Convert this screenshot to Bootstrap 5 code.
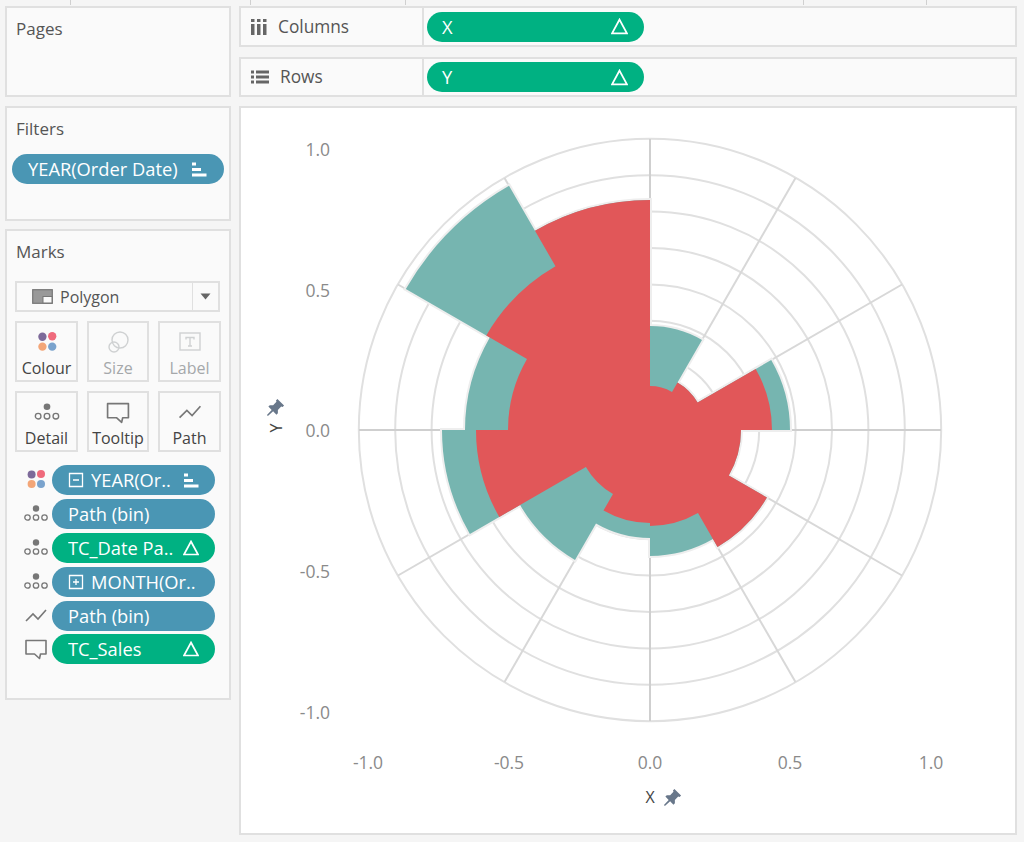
<!DOCTYPE html>
<html lang="en">
<head>
<meta charset="utf-8">
<title>Polar chart</title>
<link href="https://cdn.jsdelivr.net/npm/bootstrap@5.3.0/dist/css/bootstrap.min.css" rel="stylesheet">
<style>
html,body{height:842px;overflow:hidden}
body{background:#f5f5f5;font-family:"Open Sans","Liberation Sans",sans-serif;font-size:16px;color:#555}
.wb{height:842px;padding:6px 7px 7px 5px;gap:8px}
.side{width:226px;flex:none}
.pane{background:#fafafa;border:2px solid #e0e0e0;box-sizing:border-box}
.pg{height:91px;margin-bottom:9px}.fl{height:115px;margin-bottom:8px}.mk{height:471px}
.ttl{font-size:17px;color:#555;line-height:20px;padding:11px 0 0 9px}
.main{flex:1;gap:10px;min-width:0}
.shelf{height:41px}
.shelf+.shelf{height:40px;margin-bottom:-1px}
.shelf-h{width:183px;flex:none;border-right:2px solid #e0e0e0;padding-left:10px;gap:11px;font-size:17.300px}
.pl{height:30px;color:#fff;font-size:18.300px;line-height:30px;padding:0 15px;white-space:nowrap}
.blue{background:#4a96b4}.green{background:#00b182}
.sh-pl{width:217px;margin:0 0 0 3px;padding:0 16px 0 15px}
.fp{margin:15px 5px 0 5px;padding:0 17px 0 16px}
.dd{height:31px;margin:19px 9px 0 8px;border:2px solid #e0e0e0;background:#fafafa;font-size:16px}
.dd-l{flex:1;padding-left:15px;gap:7px}
.dd-r{width:26px;border-left:1px solid #e0e0e0;flex:none}
.cards{padding:9px 9px 0 8px;grid-template-columns:63px 62px 63px;column-gap:9px;row-gap:9px;display:grid}
.cd{height:61px;border:2px solid #e0e0e0;font-size:16px;line-height:18px;color:#444;padding-top:7px;gap:4px}
.cd svg{height:25px;width:30px}
.off{color:#a5a8aa}
.rows{padding:13px 14px 0 0;gap:3.900px}
.rw{height:30px;gap:4px;padding-left:17px}
.rw>svg{width:24px;height:24px;flex:none}
.rw .pl{flex:1;padding:0 16px;display:flex;align-items:center;gap:7px}
.grow{flex:1;overflow:hidden}
.chart{background:#fff;flex:1;min-height:0;position:relative}
.chart svg{position:absolute;left:-2px;top:-2px}
.ax{font-family:"Open Sans","Liberation Sans",sans-serif;font-size:17.500px;fill:#8a8a8a}
.axn{font-family:"Open Sans","Liberation Sans",sans-serif;font-size:16px;fill:#444}
.rul{height:7px;position:absolute;top:0;left:0;width:1024px}
.rul i{position:absolute;top:0;height:5px;width:1px;background:#d0d0d0}
</style>
</head>
<body>
<svg width="0" height="0" class="d-block position-absolute">
<defs>
<symbol id="tri" viewBox="0 0 16 16"><path d="M8 1.500 L15 14.500 H1 Z" fill="none" stroke="#fff" stroke-width="1.700"/></symbol>
<symbol id="srt" viewBox="0 0 16 16"><path d="M1 1.500h4v3H1zM1 7h9v3H1zM1 12.500h14.500v3H1z" fill="#fff"/></symbol>
<symbol id="mns" viewBox="0 0 16 16"><path d="M1.500 1.500h13v13h-13zM5 8h6" fill="none" stroke="#fff" stroke-width="1.300"/></symbol>
<symbol id="pls" viewBox="0 0 16 16"><path d="M1.500 1.500h13v13h-13zM5 8h6M8 5v6" fill="none" stroke="#fff" stroke-width="1.300"/></symbol>
<symbol id="clr" viewBox="0 0 24 24"><circle cx="7.600" cy="6.500" r="4" fill="#7d6a9a"/><circle cx="17" cy="6" r="4" fill="#ef6a7c"/><circle cx="7.600" cy="16" r="4" fill="#f3a678"/><circle cx="17" cy="16" r="4" fill="#7aa3cd"/></symbol>
<symbol id="dtl" viewBox="0 0 24 24"><circle cx="12" cy="6.500" r="3.200" fill="#777"/><g fill="none" stroke="#777" stroke-width="1.300"><circle cx="3.500" cy="15.500" r="2.700"/><circle cx="12" cy="15.500" r="2.700"/><circle cx="20.500" cy="15.500" r="2.700"/></g></symbol>
<symbol id="pth" viewBox="0 0 24 24"><path d="M2 17 L9 10 L14 15 L22 6" fill="none" stroke="#777" stroke-width="1.600"/></symbol>
<symbol id="tip" viewBox="0 0 24 24"><path d="M2 3.500 H22 V17 H16.500 L15.500 21.500 L10.500 17 H2 Z" fill="none" stroke="#777" stroke-width="1.600" stroke-linejoin="round"/></symbol>
<symbol id="pin" viewBox="0 0 20 20"><path d="M12 1 L19 8 L17.500 9.500 L16 9 L12.500 12.500 L12.500 16 L11 17.500 L7.500 14 L2 19 L1 18 L6 12.500 L2.500 9 L4 7.500 L7.500 7.500 L11 4 L10.500 2.500 Z" fill="#68778a"/></symbol>
</defs>
</svg>
<div class="rul"><i style="left:70px"></i><i style="left:250px"></i><i style="left:405px"></i><i style="left:803px"></i><i style="left:926px"></i></div>
<div class="wb d-flex">
  <div class="side d-flex flex-column">
    <div class="pane pg"><div class="ttl">Pages</div></div>
    <div class="pane fl"><div class="ttl">Filters</div>
      <div class="pl blue rounded-pill fp d-flex align-items-center justify-content-between"><span>YEAR(Order Date)</span><svg width="16" height="16"><use href="#srt"/></svg></div>
    </div>
    <div class="pane mk"><div class="ttl">Marks</div>
      <div class="dd d-flex align-items-stretch">
        <div class="dd-l d-flex align-items-center">
          <svg width="21" height="15" viewBox="0 0 21 15"><rect x=".7" y=".7" width="19.600" height="13.600" fill="#999" stroke="#777" stroke-width="1.200"/><rect x="11" y="7.500" width="9" height="6.500" fill="#fafafa" stroke="#777"/></svg>
          <span>Polygon</span>
        </div>
        <div class="dd-r d-flex align-items-center justify-content-center"><svg width="11" height="7" viewBox="0 0 11 7"><path d="M.5 .5h10L5.500 6.500z" fill="#666"/></svg></div>
      </div>
      <div class="cards">
        <div class="cd d-flex flex-column align-items-center"><svg><use href="#clr"/></svg><span>Colour</span></div>
        <div class="cd off d-flex flex-column align-items-center"><svg viewBox="0 0 30 25"><g fill="none" stroke="#cfd1d2" stroke-width="1.400"><circle cx="17" cy="10" r="8"/><circle cx="11" cy="17" r="5"/></g></svg><span>Size</span></div>
        <div class="cd off d-flex flex-column align-items-center"><svg viewBox="0 0 30 25"><rect x="5" y="3" width="20" height="17" fill="none" stroke="#cfd1d2" stroke-width="1.400"/><path d="M11 9.500v-2h8v2M15 7.500v8.500M13 16h4" fill="none" stroke="#cfd1d2" stroke-width="1.400"/></svg><span>Label</span></div>
        <div class="cd d-flex flex-column align-items-center"><svg><use href="#dtl"/></svg><span>Detail</span></div>
        <div class="cd d-flex flex-column align-items-center"><svg><use href="#tip"/></svg><span>Tooltip</span></div>
        <div class="cd d-flex flex-column align-items-center"><svg><use href="#pth"/></svg><span>Path</span></div>
      </div>
      <div class="rows d-flex flex-column">
        <div class="rw d-flex align-items-center"><svg><use href="#clr"/></svg><div class="pl blue rounded-pill"><svg width="16" height="16"><use href="#mns"/></svg><span class="grow">YEAR(Or..</span><svg width="16" height="16"><use href="#srt"/></svg></div></div>
        <div class="rw d-flex align-items-center"><svg><use href="#dtl"/></svg><div class="pl blue rounded-pill"><span class="grow">Path (bin)</span></div></div>
        <div class="rw d-flex align-items-center"><svg><use href="#dtl"/></svg><div class="pl green rounded-pill"><span class="grow">TC_Date Pa..</span><svg width="16" height="16"><use href="#tri"/></svg></div></div>
        <div class="rw d-flex align-items-center"><svg><use href="#dtl"/></svg><div class="pl blue rounded-pill"><svg width="16" height="16"><use href="#pls"/></svg><span class="grow">MONTH(Or..</span></div></div>
        <div class="rw d-flex align-items-center"><svg><use href="#pth"/></svg><div class="pl blue rounded-pill"><span class="grow">Path (bin)</span></div></div>
        <div class="rw d-flex align-items-center"><svg><use href="#tip"/></svg><div class="pl green rounded-pill"><span class="grow">TC_Sales</span><svg width="16" height="16"><use href="#tri"/></svg></div></div>
      </div>
    </div>
  </div>
  <div class="main d-flex flex-column">
    <div class="pane shelf d-flex">
      <div class="shelf-h d-flex align-items-center"><svg width="16" height="18" viewBox="0 0 16 18"><path d="M0 1h3.500v3H0zM6 1h3.500v3H6zM12 1h3.500v3H12zM0 6h3.500v11H0zM6 6h3.500v11H6zM12 6h3.500v11H12z" fill="#666"/></svg><span>Columns</span></div>
      <div class="d-flex align-items-center"><div class="pl green rounded-pill sh-pl d-flex align-items-center justify-content-between"><span>X</span><svg width="17" height="17"><use href="#tri"/></svg></div></div>
    </div>
    <div class="pane shelf d-flex">
      <div class="shelf-h d-flex align-items-center"><svg width="18" height="14" viewBox="0 0 18 14"><path d="M0 .5h3v3H0zM5 .5h13v3H5zM0 5.500h3v3H0zM5 5.500h13v3H5zM0 10.500h3v3H0zM5 10.500h13v3H5z" fill="#666"/></svg><span>Rows</span></div>
      <div class="d-flex align-items-center"><div class="pl green rounded-pill sh-pl d-flex align-items-center justify-content-between"><span>Y</span><svg width="17" height="17"><use href="#tri"/></svg></div></div>
    </div>
    <div class="pane chart">
      <svg id="polar" width="778" height="729" viewBox="239 106 778 729" xmlns="http://www.w3.org/2000/svg">
        <g id="grid" fill="none" stroke="#e0e0e0" stroke-width="2"></g>
        <g id="marks"></g>
        <g class="ax" text-anchor="end">
          <text x="330" y="156">1.0</text><text x="330" y="297">0.5</text><text x="330" y="437">0.0</text><text x="330" y="578">-0.5</text><text x="330" y="719">-1.0</text>
        </g>
        <g class="ax" text-anchor="middle">
          <text x="368" y="769">-1.0</text><text x="509" y="769">-0.5</text><text x="650" y="769">0.0</text><text x="790" y="769">0.5</text><text x="931" y="769">1.0</text>
        </g>
        <text class="axn" x="650" y="803" text-anchor="middle">X</text>
        <text class="axn" transform="translate(282 428) rotate(-90)" text-anchor="middle">Y</text>
        <use href="#pin" x="663" y="788" width="19" height="19"/>
        <use href="#pin" x="266" y="398" width="19" height="19"/>
      </svg>
    </div>
  </div>
</div>
<script>
(function(){
  var cx=650,cy=430,NS="http://www.w3.org/2000/svg";
  var teal=[104,0,140,0,0,126,108,150,208,185,282,0];
  var red=[44,55,122,91,135,96,93,74,174,142,189,230];
  function add(g,attrs){var e=document.createElementNS(NS,attrs.tag);for(var k in attrs)if(k!="tag")e.setAttribute(k,attrs[k]);g.appendChild(e);}
  function pt(r,a){var t=a*Math.PI/180;return (cx+r*Math.sin(t)).toFixed(1)+" "+(cy-r*Math.cos(t)).toFixed(1);}
  function outline(rs){var d="";for(var i=0;i<12;i++){var r=rs[i],a=i*30;d+=(i?"L":"M")+pt(r,a)+" A"+r+" "+r+" 0 0 1 "+pt(r,a+30)+" ";}return d+"Z";}
  var grid=document.getElementById("grid"),marks=document.getElementById("marks");
  for(var k=1;k<=8;k++)add(grid,{tag:"circle",cx:cx,cy:cy,r:(k*36.4).toFixed(1)});
  for(var i=0;i<12;i++){if(i%3)add(grid,{tag:"path",stroke:"#d8d8d8",d:"M"+cx+" "+cy+" L"+pt(291,i*30)});}
  add(grid,{tag:"path",stroke:"#cfcfcf",d:"M359 430H941M650 139V721"});
  var outer=teal.map(function(t,i){return Math.max(t,red[i]);});
  add(marks,{tag:"path",d:outline(outer),fill:"#76b5b0",stroke:"#eeeeee","stroke-width":4,"stroke-linejoin":"miter"});
  add(marks,{tag:"path",d:outline(outer),fill:"#76b5b0"});
  add(marks,{tag:"path",d:outline(red),fill:"#e15759"});
})();
</script>
</body>
</html>
